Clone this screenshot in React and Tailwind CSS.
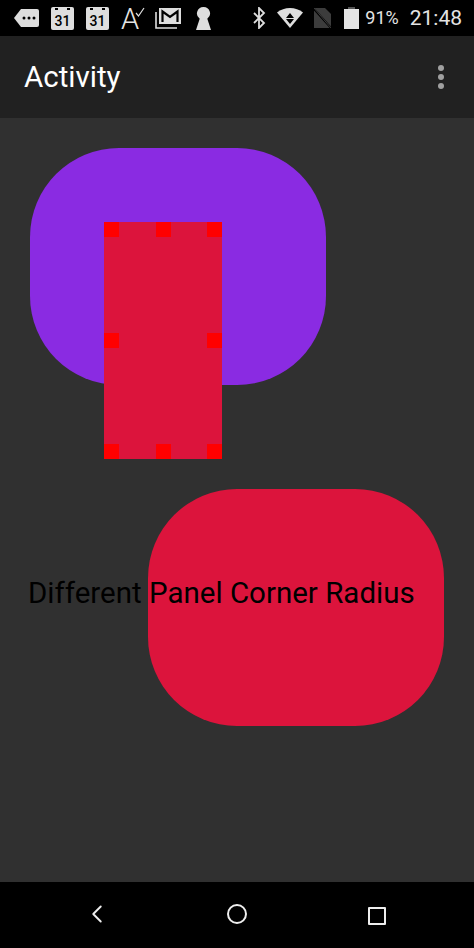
import { ChevronLeft } from "lucide-react";

const roboto = { fontFamily: "Roboto, sans-serif" };

const CalendarIcon = () => (
    <div className="relative w-[23px] h-[23px] bg-[#dedede] rounded-[2px] flex items-end justify-center">
        <div className="absolute top-[1px] left-[4px] w-[3px] h-[2px] bg-black" />
        <div className="absolute top-[1px] right-[4px] w-[3px] h-[2px] bg-black" />
        <span className="text-[14px] leading-[18px] font-medium text-black">31</span>
    </div>
);

const Handle = () => <div className="w-[15px] h-[15px] bg-[#ff0000]" />;

const StatusBar = () => (
    <div className="h-9 bg-black flex items-center text-[#e4e4e4]">
        <div className="flex items-center pl-[14px]">
            <svg width="25" height="18" viewBox="0 0 25 18" className="mr-3">
                <path d="M7 0h16a2 2 0 0 1 2 2v14a2 2 0 0 1-2 2H7L0 9z" fill="#dedede" />
                <circle cx="10" cy="9" r="1.5" fill="#000" />
                <circle cx="15" cy="9" r="1.5" fill="#000" />
                <circle cx="20" cy="9" r="1.5" fill="#000" />
            </svg>
            <div className="mr-3"><CalendarIcon /></div>
            <div className="mr-3"><CalendarIcon /></div>
            <div className="relative w-[24px] h-[24px] mr-[10px]">
                <span className="absolute left-0 top-[-2px] text-[29px] leading-[30px] font-light text-[#e4e4e4]">A</span>
                <svg width="10" height="10" viewBox="0 0 10 10" className="absolute right-0 top-[1px]">
                    <path d="M1 6l2.5 3L9 1" fill="none" stroke="#dedede" strokeWidth="1.2" />
                </svg>
            </div>
            <svg width="26" height="21" viewBox="0 0 26 21" className="mr-[15px]">
                <path d="M4 0h22v16H4z" fill="#dedede" />
                <path d="M7.5 14V3.500l7.500 5.500 7.500-5.500V14" fill="none" stroke="#000" strokeWidth="2.2" />
                <path d="M1 4v16h21" fill="none" stroke="#dedede" strokeWidth="1.6" />
            </svg>
            <svg width="15" height="23" viewBox="0 0 15 23">
                <path d="M7.5 0a6.500 6.500 0 0 1 3.800 11.800L15 23H0l3.700-11.200A6.500 6.500 0 0 1 7.500 0z" fill="#dedede" />
            </svg>
        </div>
        <div className="ml-auto flex items-center pr-3">
            <svg width="13" height="22" viewBox="0 0 13 22" className="mr-[11px]">
                <path d="M1 6l10 10-5 5V1l5 5L1 16" fill="none" stroke="#dedede" strokeWidth="1.8" />
            </svg>
            <svg width="26" height="20" viewBox="0 0 26 20" className="mr-[11px]">
                <path d="M0 4.500C7-1.500 19-1.500 26 4.500L13 20z" fill="#dedede" />
                <path d="M13 5l-4 5h8zM13 16l-4-5h8z" fill="#000" />
            </svg>
            <svg width="17" height="20" viewBox="0 0 17 20" className="mr-[13px]">
                <path d="M0 20V0h11l6 6v14z" fill="#3c3c3c" />
                <path d="M0 1l17 19" stroke="#000" strokeWidth="2" />
                <path d="M0 0l17 20" stroke="#3c3c3c" strokeWidth="1" />
            </svg>
            <div className="flex flex-col items-center mr-[6px]">
                <div className="w-[7px] h-[2px] bg-[#555555]" />
                <div className="w-[15px] h-[20px] bg-[#e4e4e4]" />
            </div>
            <span className="text-[18px] leading-none mr-[11px]">91%</span>
            <span className="text-[21px] leading-none">21:48</span>
        </div>
    </div>
);

const AppBar = () => (
    <div className="h-[82px] bg-[#212121] flex items-center justify-between pl-6 pr-[30px]">
        <span className="text-[29.5px] text-white mt-[1px]">Activity</span>
        <div className="flex flex-col gap-[3px]">
            <div className="w-[6px] h-[6px] rounded-full bg-[#a0a0a0]" />
            <div className="w-[6px] h-[6px] rounded-full bg-[#a0a0a0]" />
            <div className="w-[6px] h-[6px] rounded-full bg-[#a0a0a0]" />
        </div>
    </div>
);

const SelectedPanel = () => (
    <div className="absolute left-[74px] top-[74px] w-[118px] h-[237px] bg-[#dc143c] flex flex-col justify-between">
        <div className="flex justify-between"><Handle /><Handle /><Handle /></div>
        <div className="flex justify-between"><Handle /><Handle /></div>
        <div className="flex justify-between"><Handle /><Handle /><Handle /></div>
    </div>
);

export default function App() {
    return (
        <div className="w-[474px] h-[948px] flex flex-col bg-[#303030] overflow-hidden" style={roboto}>
            <StatusBar />
            <AppBar />
            <div className="relative flex-1 bg-[#303030] pt-[30px] pl-[30px]">
                <div className="relative w-[296px] h-[237px] bg-[#8a2be2] rounded-[89px]">
                    <SelectedPanel />
                </div>
                <div className="w-[296px] h-[237px] ml-[118px] mt-[104px] bg-[#dc143c] rounded-[89px]" />
                <span className="absolute left-[28px] top-[455px] text-[29.5px] leading-[40px] text-black whitespace-nowrap">
                    Different Panel Corner Radius
                </span>
            </div>
            <div className="h-[66px] bg-black flex items-center justify-center gap-[100px] pb-[3px]">
                <div className="w-10 flex justify-center">
                    <ChevronLeft size={30} strokeWidth={1.5} className="text-[#eeeeee]" />
                </div>
                <div className="w-10 flex justify-center">
                    <div className="w-5 h-5 rounded-full border-2 border-[#eeeeee]" />
                </div>
                <div className="w-10 flex justify-center">
                    <div className="w-[18px] h-[18px] mt-[5px] rounded-[1px] border-2 border-[#eeeeee]" />
                </div>
            </div>
        </div>
    );
}
